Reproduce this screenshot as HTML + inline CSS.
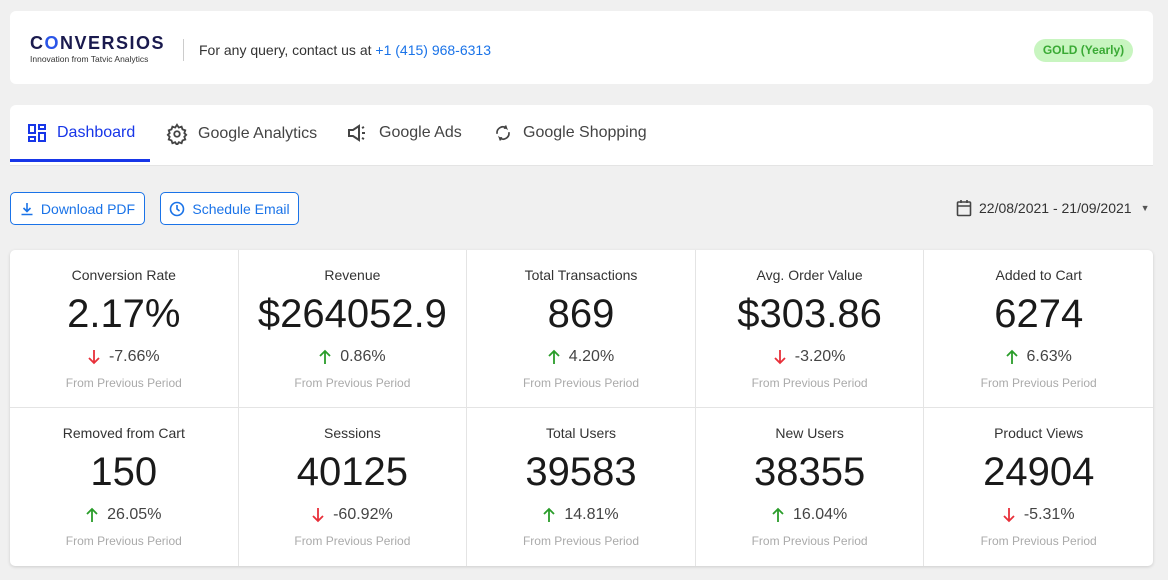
<!DOCTYPE html>
<html><head><meta charset="utf-8"><style>
*{box-sizing:border-box;margin:0;padding:0}
body{width:1168px;height:580px;background:#f0f0f0;font-family:"Liberation Sans",Arial,sans-serif;position:relative;overflow:hidden}
.hdr{position:absolute;left:10px;top:11px;width:1143px;height:73px;background:#fff;border-radius:6px}
.logo{position:absolute;left:30px;top:34px}
.logo .t{font-size:18px;font-weight:bold;letter-spacing:1.5px;color:#1a1a4e;line-height:18px}
.logo .s{font-size:8.5px;color:#333;margin-top:2px}
.sep{position:absolute;left:183px;top:39px;width:1px;height:22px;background:#ccc}
.q{position:absolute;left:199px;top:42px;font-size:14px;color:#333}
.q span{color:#1a73e8}
.gold{position:absolute;left:1034px;top:39px;width:99px;height:23px;border-radius:12px;background:#c8f5c0;color:#3aaa35;font-size:12px;font-weight:bold;text-align:center;line-height:23px}
.tabs{position:absolute;left:10px;top:105px;width:1143px;height:61px;background:#fff;border-radius:6px 6px 0 0;border-bottom:1px solid #e4e4e4}
.tab{position:absolute;top:18px;font-size:16px;color:#444;display:flex;align-items:center;gap:10px}
.ul{position:absolute;left:0;top:54px;width:140px;height:3px;background:#1736e8}
.btn{position:absolute;top:192px;height:33px;border:1px solid #1a73e8;border-radius:5px;color:#1a73e8;font-size:14px;display:flex;align-items:center;justify-content:center;gap:7px;background:#fff}
.date{position:absolute;left:956px;top:199px;font-size:14px;color:#333;display:flex;align-items:center;gap:7px}
.grid{position:absolute;left:10px;top:250px;width:1143px;height:316px;background:#fff;border-radius:5px;box-shadow:0 1px 3px rgba(0,0,0,.15);display:grid;grid-template-columns:repeat(5,1fr);grid-template-rows:158px 158px}
.c{border-right:1px solid #e4e4e4;border-bottom:1px solid #e4e4e4;text-align:center;position:relative}
.c:nth-child(5n){border-right:none}.c:nth-child(n+6){border-bottom:none}
.c .a{position:absolute;top:17px;width:100%;font-size:14px;color:#333}
.c .v{position:absolute;top:42px;width:100%;font-size:40px;color:#1a1a1a}
.c .p{position:absolute;top:98px;width:100%;font-size:16px;color:#444;display:flex;justify-content:center;align-items:center;gap:9px}
.c .f{position:absolute;top:126px;width:100%;font-size:12px;color:#aaa}
</style></head><body>
<div class="hdr"></div>
<div class="logo"><div class="t">C<span style="color:#2a55e8">O</span>NVERSIOS</div><div class="s">Innovation from Tatvic Analytics</div></div>
<div class="sep"></div>
<div class="q">For any query, contact us at <span>+1 (415) 968-6313</span></div>
<div class="gold">GOLD (Yearly)</div>
<div class="tabs">
<div class="tab" style="left:17px;color:#1736e8"><svg width="20" height="20" viewBox="0 0 20 20" fill="none" stroke="#1736e8" stroke-width="2"><rect x="2" y="2" width="6" height="8"/><rect x="12" y="2" width="6" height="4"/><rect x="2" y="14" width="6" height="4"/><rect x="12" y="10" width="6" height="8"/></svg>Dashboard</div>
<div class="tab" style="left:156px"><svg width="22" height="22" viewBox="0 0 24 24" fill="none" stroke="#444" stroke-width="2"><circle cx="12" cy="12" r="3"/><path d="M12 2l2 3 3-1 1 3 3 1-1 3 2 2-2 2 1 3-3 1-1 3-3-1-2 3-2-3-3 1-1-3-3-1 1-3-2-2 2-2-1-3 3-1 1-3 3 1z"/></svg>Google Analytics</div>
<div class="tab" style="left:337px"><svg width="22" height="20" viewBox="0 0 22 20" fill="none" stroke="#444" stroke-width="2"><path d="M2 7h4l6-4v14l-6-4H2z"/><path d="M15 10h3M15 5l2-1M15 15l2 1"/></svg>Google Ads</div>
<div class="tab" style="left:483px"><svg width="20" height="20" viewBox="0 0 24 24" fill="none" stroke="#444" stroke-width="2"><path d="M5 13a7 7 0 0 1 11-7l-1-3M19 11a7 7 0 0 1-11 7l1 3M16 6h-3M8 18h3"/></svg>Google Shopping</div>
<div class="ul"></div>
</div>
<div class="btn" style="left:10px;width:135px"><svg width="14" height="14" viewBox="0 0 14 14" fill="none" stroke="#1a73e8" stroke-width="1.6"><path d="M7 1v8M3.5 6L7 9.5 10.5 6M1.5 12.5h11"/></svg>Download PDF</div>
<div class="btn" style="left:160px;width:139px"><svg width="16" height="16" viewBox="0 0 16 16" fill="none" stroke="#1a73e8" stroke-width="1.6"><circle cx="8" cy="8" r="6.5"/><path d="M8 4v4l2.5 2"/></svg>Schedule Email</div>
<div class="date"><svg width="16" height="18" viewBox="0 0 16 18" fill="none" stroke="#444" stroke-width="1.6"><rect x="1.5" y="3" width="13" height="13.5" rx="1"/><path d="M1.5 7h13M5 1v3M11 1v3"/></svg>22/08/2021 - 21/09/2021 <span style="font-size:9px;color:#555;margin-left:2px">▼</span></div>
<svg width="0" height="0" style="position:absolute"><defs>
<symbol id="up" viewBox="0 0 12 16"><path d="M6 15V2M1 7l5-5 5 5" fill="none" stroke="#2a9d2a" stroke-width="1.8"/></symbol>
<symbol id="dn" viewBox="0 0 12 16"><path d="M6 1v13M1 9l5 5 5-5" fill="none" stroke="#e8303a" stroke-width="1.8"/></symbol>
</defs></svg>
<div class="grid">
<div class="c"><div class="a">Conversion Rate</div><div class="v">2.17%</div><div class="p"><svg width="12" height="16"><use href="#dn"/></svg>-7.66%</div><div class="f">From Previous Period</div></div>
<div class="c"><div class="a">Revenue</div><div class="v">$264052.9</div><div class="p"><svg width="12" height="16"><use href="#up"/></svg>0.86%</div><div class="f">From Previous Period</div></div>
<div class="c"><div class="a">Total Transactions</div><div class="v">869</div><div class="p"><svg width="12" height="16"><use href="#up"/></svg>4.20%</div><div class="f">From Previous Period</div></div>
<div class="c"><div class="a">Avg. Order Value</div><div class="v">$303.86</div><div class="p"><svg width="12" height="16"><use href="#dn"/></svg>-3.20%</div><div class="f">From Previous Period</div></div>
<div class="c"><div class="a">Added to Cart</div><div class="v">6274</div><div class="p"><svg width="12" height="16"><use href="#up"/></svg>6.63%</div><div class="f">From Previous Period</div></div>
<div class="c"><div class="a">Removed from Cart</div><div class="v">150</div><div class="p"><svg width="12" height="16"><use href="#up"/></svg>26.05%</div><div class="f">From Previous Period</div></div>
<div class="c"><div class="a">Sessions</div><div class="v">40125</div><div class="p"><svg width="12" height="16"><use href="#dn"/></svg>-60.92%</div><div class="f">From Previous Period</div></div>
<div class="c"><div class="a">Total Users</div><div class="v">39583</div><div class="p"><svg width="12" height="16"><use href="#up"/></svg>14.81%</div><div class="f">From Previous Period</div></div>
<div class="c"><div class="a">New Users</div><div class="v">38355</div><div class="p"><svg width="12" height="16"><use href="#up"/></svg>16.04%</div><div class="f">From Previous Period</div></div>
<div class="c"><div class="a">Product Views</div><div class="v">24904</div><div class="p"><svg width="12" height="16"><use href="#dn"/></svg>-5.31%</div><div class="f">From Previous Period</div></div>
</div>
</body></html>
